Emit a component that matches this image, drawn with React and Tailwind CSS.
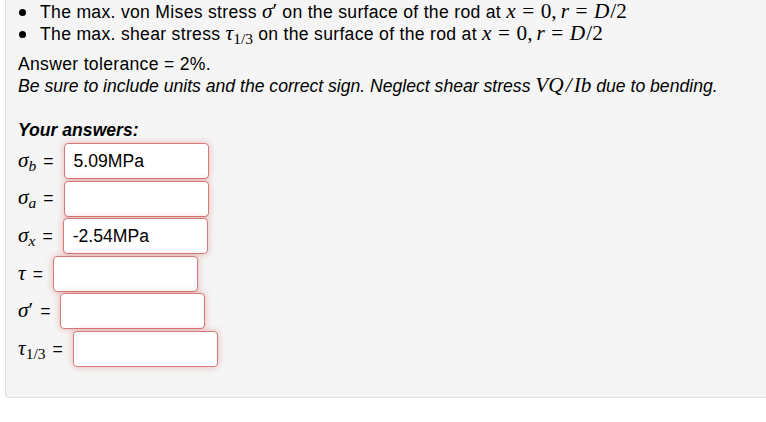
import React from 'react';

const serif = "font-['Liberation_Serif','DejaVu_Serif',serif]";

function M({ children, className = '' }) {
  return (
    <span className={`${serif} inline-block text-[21.3px] leading-none tracking-normal ${className}`}>
      {children}
    </span>
  );
}

function I({ children }) {
  return <span className="italic">{children}</span>;
}

function Sub({ children, italic }) {
  return (
    <span className={`inline-block translate-y-[4px] text-[15.5px] ${italic ? 'italic' : ''}`}>
      {children}
    </span>
  );
}

function Eq() {
  return <span className="mx-[6.5px]">=</span>;
}

function Position() {
  return (
    <M>
      <I>x</I>
      <Eq />
      0,<span className="ml-[4px]" />
      <I>r</I>
      <Eq />
      <I>D</I>
      <span className="ml-[1px]">/2</span>
    </M>
  );
}

function Bullet({ children }) {
  return (
    <li className="flex items-center leading-[22px]">
      <span className="ml-[1px] mr-[14px] h-[7px] w-[7px] shrink-0 rounded-full bg-black" />
      <span className="whitespace-nowrap tracking-[0.3px]">{children}</span>
    </li>
  );
}

function AnswerRow({ label, value }) {
  return (
    <div className="flex items-center">
      <span className="whitespace-nowrap">
        {label}
        <span className="ml-[7px]">=</span>
      </span>
      <div className="ml-[10px] flex h-[36px] w-[145px] items-center rounded-[4px] border border-[#d47b79] bg-white pl-[9px] shadow-[0_0_7px_rgba(200,30,30,0.3)]">
        <span>{value}</span>
      </div>
    </div>
  );
}

export default function App() {
  const rows = [
    {
      label: (
        <M>
          <I>σ</I>
          <Sub italic>b</Sub>
        </M>
      ),
      value: '5.09MPa',
    },
    {
      label: (
        <M>
          <I>σ</I>
          <Sub italic>a</Sub>
        </M>
      ),
      value: '',
    },
    {
      label: (
        <M>
          <I>σ</I>
          <Sub italic>x</Sub>
        </M>
      ),
      value: '-2.54MPa',
    },
    {
      label: (
        <M>
          <I>τ</I>
        </M>
      ),
      value: '',
    },
    {
      label: (
        <M>
          <I>σ</I>′
        </M>
      ),
      value: '',
    },
    {
      label: (
        <M>
          <I>τ</I>
          <Sub>1/3</Sub>
        </M>
      ),
      value: '',
    },
  ];

  return (
    <div className="h-[422px] w-[766px] overflow-hidden bg-white font-['Liberation_Sans',Arial,sans-serif] text-[17.6px] text-black">
      <div className="ml-[5px] w-[790px] rounded-b-[4px] border border-t-0 border-[#dedede] bg-[#f5f5f5] pb-[30px] pl-[12px] pt-[1px]">
        {/* Parts */}
        <ul>
          <Bullet>
            The max. von Mises stress{' '}
            <M>
              <I>σ</I>′
            </M>{' '}
            on the surface of the rod at <Position />
          </Bullet>
          <Bullet>
            The max. shear stress{' '}
            <M>
              <I>τ</I>
              <Sub>1/3</Sub>
            </M>{' '}
            on the surface of the rod at <Position />
          </Bullet>
        </ul>

        <p className="mt-[8px] leading-[22px] tracking-[0.3px]">Answer tolerance = 2%.</p>
        <p className="whitespace-nowrap italic leading-[22px]">
          Be sure to include units and the correct sign. Neglect shear stress{' '}
          <M>
            <I>VQ</I>
            <span className="mx-[2px]">/</span>
            <I>Ib</I>
          </M>{' '}
          due to bending.
        </p>

        {/* Answers */}
        <p className="mt-[22px] font-bold italic leading-[22px]">Your answers:</p>
        <div className="mt-[2px] flex flex-col gap-[1.6px]">
          {rows.map((r, i) => (
            <AnswerRow key={i} label={r.label} value={r.value} />
          ))}
        </div>
      </div>
    </div>
  );
}
